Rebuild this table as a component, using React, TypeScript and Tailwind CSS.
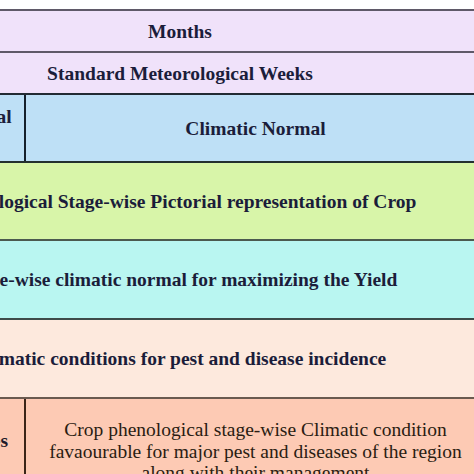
import React from 'react';

const serif = { fontFamily: '"Liberation Serif", "Times New Roman", serif' };

export default function App() {
  return (
    <div className="w-[474px] h-[474px] overflow-hidden bg-white pt-[9px]" style={serif}>
      <div className="ml-[-125px] w-[610px] text-[19.5px] leading-[23px] font-bold text-[#1b1d3a]">
        {/* months */}
        <div className="h-[44px] border-y-2 border-[#5f5968] bg-[#f0e2fa] flex items-center justify-center">
          Months
        </div>
        <div className="h-[42px] border-b-2 border-[#222b33] bg-[#f0e2fa] flex items-center justify-center">
          Standard Meteorological Weeks
        </div>

        {/* climatic normal */}
        <div className="h-[68px] border-b-2 border-[#23302f] bg-[#bee0f6] flex">
          <div className="w-[151px] shrink-0 border-r-2 border-[#14202c] flex items-center justify-center text-center">
            Meteorological
            <br />
            Parameter
          </div>
          <div className="flex-1 flex items-center justify-center">Climatic Normal</div>
        </div>

        <div className="h-[78px] border-b-2 border-[#4b5a4f] bg-[#d8f5a9] flex items-center justify-center whitespace-nowrap pl-[3px]">
          Phenological Stage-wise Pictorial representation of Crop
        </div>
        <div className="h-[79px] border-b-2 border-[#3d4b49] bg-[#b9f6f1] flex items-center justify-center whitespace-nowrap">
          Stage-wise climatic normal for maximizing the Yield
        </div>
        <div className="h-[79px] border-b-2 border-[#6a5a4f] bg-[#fde9dd] flex items-center justify-center whitespace-nowrap">
          Climatic conditions for pest and disease incidence
        </div>

        {/* pest row */}
        <div className="h-[120px] bg-[#fdcab4] flex">
          <div className="w-[151px] shrink-0 border-r-2 border-[#3a2418] pt-[30px] text-center text-[#1f1a2a]">
            Pests/Diseases
          </div>
          <div className="flex-1 pt-[20px] text-center font-normal leading-[21.5px] text-[#2a1c12] whitespace-nowrap">
            Crop phenological stage-wise Climatic condition
            <br />
            favaourable for major pest and diseases of the region
            <br />
            along with their management
          </div>
        </div>
      </div>
    </div>
  );
}
